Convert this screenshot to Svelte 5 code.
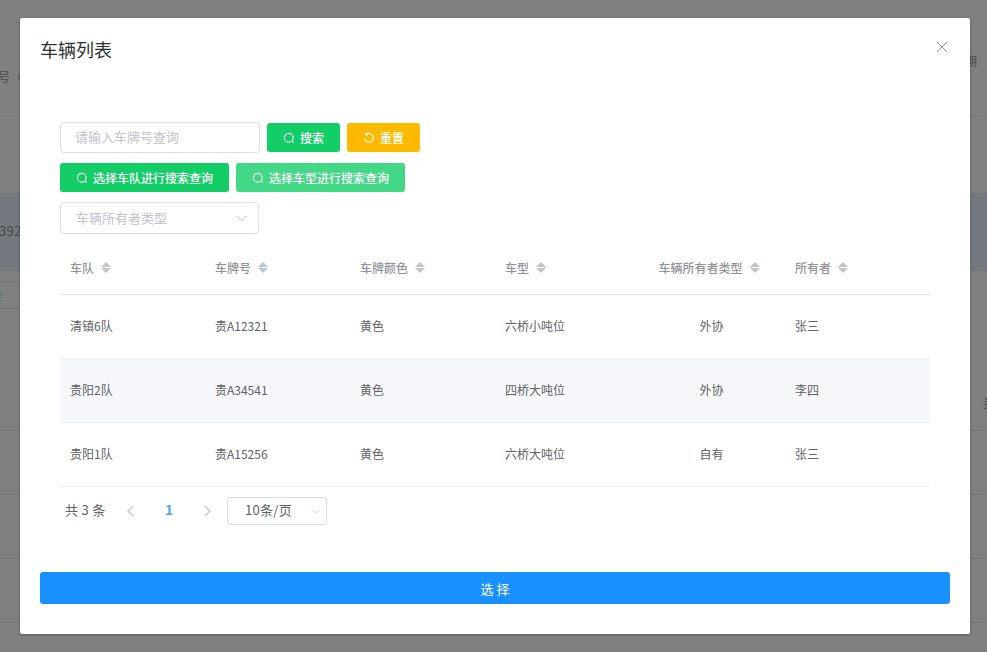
<script>
	const columns = ['车队', '车牌号', '车牌颜色', '车型', '车辆所有者类型', '所有者'];
	const rows = [
		['清镇6队', '贵A12321', '黄色', '六桥小吨位', '外协', '张三'],
		['贵阳2队', '贵A34541', '黄色', '四桥大吨位', '外协', '李四'],
		['贵阳1队', '贵A15256', '黄色', '六桥大吨位', '自有', '张三']
	];
</script>

{#snippet searchIcon()}
	<svg class="btn-icon" viewBox="0 0 12 12" fill="none" stroke="currentColor" stroke-width="1.1">
		<circle cx="5.8" cy="5.8" r="4.4" />
		<path d="M9 9l1.6 1.6" />
	</svg>
{/snippet}

{#snippet chevronDown()}
	<svg class="chevron" viewBox="0 0 12 7" fill="none" stroke="currentColor" stroke-width="1">
		<path d="M1 1l5 5 5-5" />
	</svg>
{/snippet}

<div class="backdrop-page">
	<div class="bg-head">
		<span class="bg-no">号<span class="sort dim"><i class="up"></i><i class="down"></i></span></span>
		<span class="bg-date">期</span>
	</div>
	<div class="bg-gap"></div>
	<div class="bg-band"><span>3921</span></div>
	<div class="bg-box"><span>亖</span></div>
	<div class="bg-row first"><span>贵</span></div>
	<div class="bg-row"></div>
	<div class="bg-row"></div>
	<div class="bg-row"></div>
</div>

<div class="dialog">
	<header>
		<h2>车辆列表</h2>
		<svg class="close" viewBox="0 0 12 12" fill="none" stroke="currentColor" stroke-width="1">
			<path d="M1 1l10 10M11 1L1 11" />
		</svg>
	</header>

	<div class="body">
		<div class="toolbar">
			<div class="line">
				<div class="input">请输入车牌号查询</div>
				<button class="btn green">{@render searchIcon()}搜索</button>
				<button class="btn amber">
					<svg class="btn-icon" viewBox="0 0 12 12" fill="none" stroke="currentColor" stroke-width="1.1">
						<path d="M3 2.6A4.4 4.4 0 1 1 1.6 6" />
						<path d="M2.6 .8v2.2h2.2" />
					</svg>
					重置
				</button>
			</div>
			<div class="line">
				<button class="btn green">{@render searchIcon()}选择车队进行搜索查询</button>
				<button class="btn mint">{@render searchIcon()}选择车型进行搜索查询</button>
			</div>
			<div class="line">
				<div class="input select">车辆所有者类型{@render chevronDown()}</div>
			</div>
		</div>

		<table>
			<thead>
				<tr>
					{#each columns as col, i}
						<th class:center={i === 4}>
							<span class="th-inner">
								{col}
								<span class="sort"><i class="up"></i><i class="down"></i></span>
							</span>
						</th>
					{/each}
				</tr>
			</thead>
			<tbody>
				{#each rows as row, r}
					<tr class:striped={r === 1}>
						{#each row as cell, i}
							<td class:center={i === 4}>{cell}</td>
						{/each}
					</tr>
				{/each}
			</tbody>
		</table>

		<div class="pager">
			<span class="total">共 3 条</span>
			<svg class="arrow" viewBox="0 0 7 12" fill="none" stroke="currentColor" stroke-width="1.2"><path d="M6 1L1 6l5 5" /></svg>
			<span class="page">1</span>
			<svg class="arrow" viewBox="0 0 7 12" fill="none" stroke="currentColor" stroke-width="1.2"><path d="M1 1l5 5-5 5" /></svg>
			<div class="size">10条/页{@render chevronDown()}</div>
		</div>
	</div>

	<button class="choose">选 择</button>
</div>

<style>
	:global(body) {
		margin: 0;
		background: #808080;
		font-family: "Noto Sans CJK SC", "Liberation Sans", sans-serif;
		overflow: hidden;
	}

	.backdrop-page {
		height: 652px;
		color: #4a4a4a;
		font-size: 12px;
		overflow: hidden;
		position: relative;
	}

	.bg-head {
		height: 117px;
		border-bottom: 1px solid #737880;
		box-sizing: border-box;
		display: flex;
		justify-content: space-between;
		align-items: flex-start;
	}

	.bg-head > span {
		line-height: 18px;
	}

	.bg-no {
		margin: 68px 0 0 -2px;
		display: flex;
		align-items: center;
	}

	.bg-date {
		margin: 52px 10px 0 0;
	}

	.bg-gap {
		height: 76px;
	}

	.bg-band {
		height: 78px;
		background: #737780;
		display: flex;
		align-items: center;
		margin-left: -1px;
		padding-bottom: 3px;
		box-sizing: border-box;
		font-size: 13px;
		letter-spacing: .4px;
	}

	.bg-box {
		width: 19px;
		height: 28px;
		margin-top: 10px;
		box-sizing: border-box;
		border: solid #737373;
		border-width: 1px 0;
		color: #4f6f70;
		display: flex;
		align-items: center;
		justify-content: flex-start;
		text-indent: -9px;
	}

	.bg-row {
		height: 64px;
		box-sizing: border-box;
		border-bottom: 1px solid #757575;
		display: flex;
		justify-content: flex-end;
	}

	.bg-row.first {
		height: 122px;
		padding-top: 85px;
		margin-right: -8px;
	}

	.dialog {
		position: absolute;
		left: 20px;
		top: 18px;
		width: 950px;
		height: 616px;
		background: #fff;
		border-radius: 2px;
		box-shadow: 0 1px 3px rgba(0, 0, 0, .3);
		box-sizing: border-box;
		padding: 20px 20px 30px;
		display: flex;
		flex-direction: column;
	}

	header {
		display: flex;
		justify-content: space-between;
		height: 84px;
	}

	h2 {
		margin: -1px 0 0;
		font-size: 18px;
		font-weight: 400;
		line-height: 24px;
		color: #303133;
	}

	.close {
		width: 12px;
		height: 12px;
		margin: 3px 2px 0 0;
		color: #909399;
	}

	.body {
		padding: 0 20px;
	}

	.toolbar {
		display: flex;
		flex-direction: column;
		gap: 10px;
	}

	.line {
		display: flex;
		align-items: center;
		gap: 7px;
	}

	.input {
		width: 200px;
		height: 31px;
		box-sizing: border-box;
		border: 1px solid #dcdfe6;
		border-radius: 4px;
		padding-left: 14px;
		font-size: 13px;
		line-height: 27px;
		color: #c0c4cc;
		background: #fff;
	}

	.input.select {
		width: 199px;
		height: 32px;
		display: flex;
		justify-content: space-between;
		align-items: center;
		padding: 0 10px 2px 15px;
	}

	.chevron {
		width: 13px;
		height: 7px;
		color: #c0c4cc;
		margin-top: 2px;
	}

	.btn {
		height: 29px;
		padding: 0 16px;
		border: 0;
		border-radius: 3px;
		color: #fff;
		font: inherit;
		font-size: 12px;
		font-weight: 500;
		display: flex;
		align-items: center;
		gap: 5px;
	}

	.btn-icon {
		width: 12px;
		height: 12px;
	}

	.green {
		background: #13ce66;
	}

	.mint {
		background: #42d885;
	}

	.amber {
		background: #ffba00;
	}

	table {
		width: 870px;
		margin-top: 8px;
		border-collapse: collapse;
		table-layout: fixed;
		font-size: 12px;
	}

	th {
		height: 52px;
		padding: 0 10px;
		text-align: left;
		font-weight: 500;
		color: #909399;
		border-bottom: 1px solid #e4e7ed;
	}

	.th-inner {
		display: inline-flex;
		align-items: center;
		height: 16px;
		position: relative;
		top: -1px;
		white-space: nowrap;
	}

	td {
		height: 64px;
		padding: 0 10px 3px;
		box-sizing: border-box;
		color: #606266;
		border-bottom: 1px solid #ebeef5;
	}

	td.center {
		padding-right: 12px;
	}

	.center {
		text-align: center;
	}

	.striped td {
		background: #f5f7fa;
	}

	.sort {
		display: inline-flex;
		flex-direction: column;
		align-items: center;
		gap: 1px;
		width: 24px;
	}

	.sort i {
		width: 0;
		height: 0;
		border-left: 5px solid transparent;
		border-right: 5px solid transparent;
	}

	.up {
		border-bottom: 5px solid #c0c4cc;
	}

	.down {
		border-top: 5px solid #c0c4cc;
	}

	.dim .up {
		border-bottom-color: #606060;
	}

	.dim .down {
		border-top-color: #606060;
	}

	.pager {
		display: flex;
		align-items: center;
		height: 28px;
		margin-top: 10px;
		padding-left: 5px;
		font-size: 13px;
		color: #606266;
	}

	.pager > span,
	.size {
		line-height: 24px;
	}

	.total {
		width: 62px;
		letter-spacing: .3px;
		padding-bottom: 3px;
	}

	.arrow {
		width: 7px;
		height: 12px;
		color: #c0c4cc;
	}

	.page {
		width: 70px;
		text-align: center;
		color: #409eff;
		font-weight: 700;
		padding-bottom: 3px;
	}

	.size {
		width: 100px;
		height: 28px;
		margin-left: 16px;
		box-sizing: border-box;
		border: 1px solid #dcdfe6;
		border-radius: 3px;
		padding: 0 6px 2px 17px;
		display: flex;
		justify-content: space-between;
		align-items: center;
		letter-spacing: .3px;
	}

	.size .chevron {
		width: 9px;
		height: 5px;
		margin-top: 3px;
	}

	.choose {
		margin-top: auto;
		height: 32px;
		flex: none;
		border: 0;
		border-radius: 3px;
		background: #1890ff;
		color: #fff;
		font: inherit;
		font-size: 13px;
	}
</style>
